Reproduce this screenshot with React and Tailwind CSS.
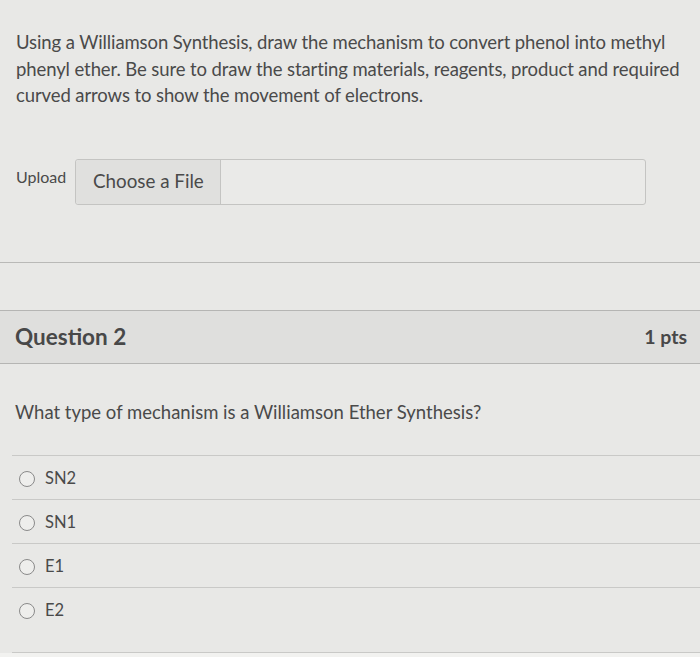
const answers = ["SN2", "SN1", "E1", "E2"]

const App = () => {
    return (
        <div
            className="w-[700px] h-[657px] overflow-hidden bg-[#e8e8e6] text-[#4a4a4a]"
            style={{ fontFamily: "Lato, 'Open Sans', sans-serif" }}
        >
            <div className="px-4 pt-[29px]">
                <p className="text-[18.5px] leading-[26.5px] tracking-[-0.1px]">
                    Using a Williamson Synthesis, draw the mechanism to convert phenol into methyl phenyl ether. Be sure
                    to draw the starting materials, reagents, product and required curved arrows to show the movement of
                    electrons.
                </p>

                <div className="flex items-start mt-[50px]">
                    <span className="text-[16px] w-[59px] pt-[6px]">Upload</span>
                    <div className="flex w-[571px] h-[46px] border border-[#c4c4c2] rounded-[3px] bg-[#eaeae8]">
                        <div className="flex items-center whitespace-nowrap px-[17px] w-[145px] bg-[#e0e0de] border-r border-[#c4c4c2] rounded-l-[3px] text-[18.8px]">
                            Choose a File
                        </div>
                    </div>
                </div>
            </div>

            <div className="mt-[57px] border-b border-[#b9b9b7]" />

            <div className="mt-[47px] border-t border-b border-[#b5b5b3] bg-[#dfdfdd] h-[54px] flex items-center justify-between pl-[15px] pr-[13px]">
                <span className="text-[22.5px] font-bold text-[#484848]">Question 2</span>
                <span className="text-[19.5px] font-bold text-[#484848]">1 pts</span>
            </div>

            <div className="px-[15px] pt-[35px] text-[18.5px]">What type of mechanism is a Williamson Ether Synthesis?</div>

            <div className="ml-[12px] mt-[29px] border-t border-[#c9c9c7]">
                {answers.map((a, i) => (
                    <div
                        key={a}
                        className={`flex items-center h-[44px] pl-[7px] pt-[2px] text-[16.5px] border-b border-[#c9c9c7] ${
                            i === answers.length - 1 ? "h-[65px] pb-[21px] border-[#b0b0ae]" : ""
                        }`}
                    >
                        <span className="w-[16px] h-[16px] rounded-full border border-[#8a8a8a] bg-[#eeeeec] mr-[10px]" />
                        <span>{a}</span>
                    </div>
                ))}
            </div>
            <div className="h-[6px] bg-[#f2f2f0]" />
        </div>
    )
}

export default App
